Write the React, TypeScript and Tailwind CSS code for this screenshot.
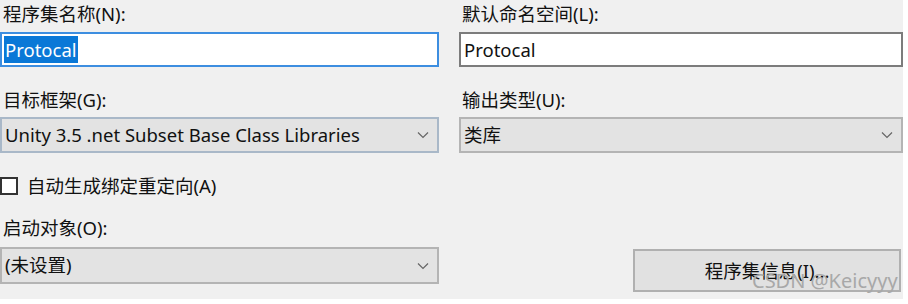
import React from "react";

const font = { fontFamily: '"Noto Sans", "Noto Sans CJK SC", sans-serif' };

function Chevron() {
  return (
    <svg width="12" height="8" viewBox="0 0 12 8" className="shrink-0">
      <path d="M1 1.5 L6 6.5 L11 1.5" fill="none" stroke="#666" strokeWidth="1.2" />
    </svg>
  );
}

function Select({ text, border }: { text: string; border: string }) {
  return (
    <div className={`flex h-full items-center justify-between bg-[#e3e3e3] border-2 ${border} pl-[3px] pr-[8px]`}>
      <span className="text-[18.5px] leading-none text-[#111]">{text}</span>
      <Chevron />
    </div>
  );
}

export default function App() {
  return (
    <div className="w-[908px] h-[304px] bg-white" style={font}>
      <div className="relative w-[903px] h-[299px] bg-[#f0f0f0] grid grid-cols-[439px_444px] gap-x-[20px] text-[#111]">
        {/* left column */}
        <div className="flex flex-col">
          <div className="h-[28px] flex items-center pl-[3px] text-[18.5px]">程序集名称(N):</div>
          <div className="mt-[4px] h-[35px] bg-white border-2 border-[#3d8ee0] flex items-center pl-[2px]">
            <span className="bg-[#0a78d7] text-white text-[18.5px] leading-[27px] px-[1px]">Protocal</span>
          </div>
          <div className="mt-[19px] h-[28px] flex items-center pl-[3px] text-[18.5px]">目标框架(G):</div>
          <div className="mt-[3px] h-[36px]">
            <Select text="Unity 3.5 .net Subset Base Class Libraries" border="border-[#a9b8c8]" />
          </div>
          <div className="mt-[24px] h-[18px] flex items-center gap-[9px]">
            <div className="w-[18px] h-[18px] bg-white border-2 border-[#333]" />
            <span className="text-[18.5px]">自动生成绑定重定向(A)</span>
          </div>
          <div className="mt-[19px] h-[28px] flex items-center pl-[3px] text-[18.5px]">启动对象(O):</div>
          <div className="mt-[5px] h-[37px]">
            <Select text="(未设置)" border="border-[#b4b4b4]" />
          </div>
        </div>
        {/* right column */}
        <div className="flex flex-col">
          <div className="h-[28px] flex items-center pl-[3px] text-[18.5px]">默认命名空间(L):</div>
          <div className="mt-[4px] h-[35px] bg-white border-2 border-[#7c7c7c] flex items-center pl-[3px]">
            <span className="text-[18.5px]">Protocal</span>
          </div>
          <div className="mt-[19px] h-[28px] flex items-center pl-[3px] text-[18.5px]">输出类型(U):</div>
          <div className="mt-[3px] h-[36px]">
            <Select text="类库" border="border-[#b4b4b4]" />
          </div>
          <div className="mt-[96px] ml-[174px] w-[268px] h-[43px] bg-[#e1e1e1] border-2 border-[#b0b0b0] flex items-center justify-center">
            <span className="text-[18.5px]">程序集信息(I)...</span>
          </div>
        </div>
        <div className="absolute left-[752px] top-[271px] text-[20px] leading-none text-[#a8a8a8] whitespace-nowrap">
          CSDN @Keicyyy
        </div>
      </div>
    </div>
  );
}
